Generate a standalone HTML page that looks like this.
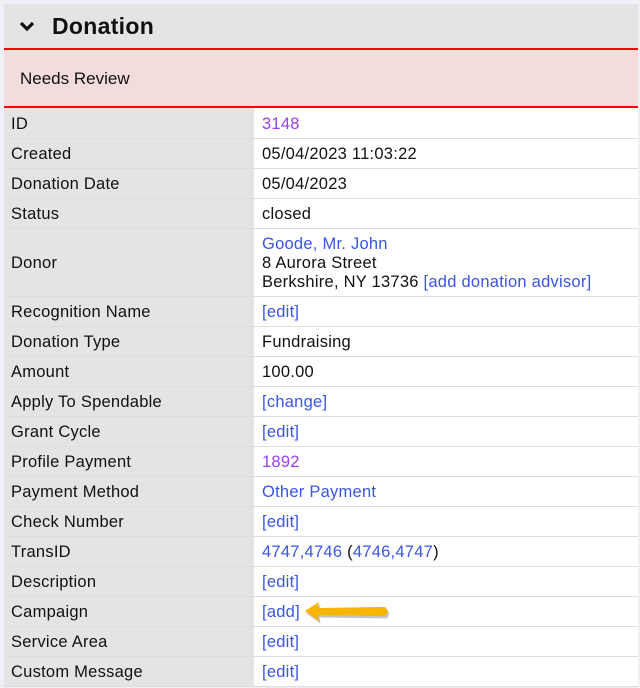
<!DOCTYPE html>
<html><head><style>
body{margin:0;background:#eef0f5;font-family:"Liberation Sans","DejaVu Sans",sans-serif;width:640px;height:688px;overflow:hidden;position:relative}
.box{position:absolute;left:4px;top:4px;width:634px;background:#fff}
.hd{height:44px;background:#e4e4e4;display:flex;align-items:center;border-bottom:2px solid #f00}
.hd svg{margin-left:15px}
.hd span{font-size:23px;margin-left:17px;color:#111;font-weight:bold;letter-spacing:0.3px}
.nr{height:56px;background:#f3dcdc;border-bottom:2px solid #f00;display:flex;align-items:center;padding-left:16px;font-size:17px;color:#111;padding-top:2px;box-sizing:border-box;height:58px}
table{border-collapse:collapse;width:634px;font-size:16.5px;letter-spacing:0.25px}
td{height:29px;border-bottom:1px solid #ddd;padding:3px 0 0 7px;color:#111;line-height:19px;box-sizing:border-box}
tr{height:30px}
td.l{background:#e4e4e4;width:250px}
td.v{padding-left:8px}
a{color:#3a55e8;text-decoration:none}
.p{color:#9a3ff0}
</style></head><body>
<div class="box">
<div class="hd"><svg width="16" height="12" viewBox="0 0 16 12"><path d="M2 3 L8 9 L14 3" stroke="#111" stroke-width="3.2" fill="none"/></svg><span>Donation</span></div>
<div class="nr">Needs Review</div>
<table>
<tr><td class="l">ID</td><td class="v"><a class="p">3148</a></td></tr>
<tr><td class="l">Created</td><td class="v">05/04/2023 11:03:22</td></tr>
<tr><td class="l">Donation Date</td><td class="v">05/04/2023</td></tr>
<tr><td class="l">Status</td><td class="v">closed</td></tr>
<tr style="height:68px"><td class="l">Donor</td><td class="v"><a>Goode, Mr. John</a><br>8 Aurora Street<br>Berkshire, NY 13736 <a>[add donation advisor]</a></td></tr>
<tr><td class="l">Recognition Name</td><td class="v"><a>[edit]</a></td></tr>
<tr><td class="l">Donation Type</td><td class="v">Fundraising</td></tr>
<tr><td class="l">Amount</td><td class="v">100.00</td></tr>
<tr><td class="l">Apply To Spendable</td><td class="v"><a>[change]</a></td></tr>
<tr><td class="l">Grant Cycle</td><td class="v"><a>[edit]</a></td></tr>
<tr><td class="l">Profile Payment</td><td class="v"><a class="p">1892</a></td></tr>
<tr><td class="l">Payment Method</td><td class="v"><a>Other Payment</a></td></tr>
<tr><td class="l">Check Number</td><td class="v"><a>[edit]</a></td></tr>
<tr><td class="l">TransID</td><td class="v"><a>4747,4746</a> (<a>4746,4747</a>)</td></tr>
<tr><td class="l">Description</td><td class="v"><a>[edit]</a></td></tr>
<tr><td class="l">Campaign</td><td class="v" style="position:relative"><a>[add]</a><svg style="position:absolute;left:48px;top:3px" width="92" height="24" viewBox="0 0 92 24"><path d="M3 12 L17 3 L16 9 L83 8 Q88 12.5 83 17 L16 16 L17 22 Z" fill="#555" opacity="0.35" transform="translate(1.5,1.5)"/><path d="M3 11 L17 2 L16 8 L83 7 Q88 11.5 83 16 L16 15 L17 21 Z" fill="#f7b500"/></svg></td></tr>
<tr><td class="l">Service Area</td><td class="v"><a>[edit]</a></td></tr>
<tr><td class="l">Custom Message</td><td class="v"><a>[edit]</a></td></tr>
</table>
</div>
</body></html>
